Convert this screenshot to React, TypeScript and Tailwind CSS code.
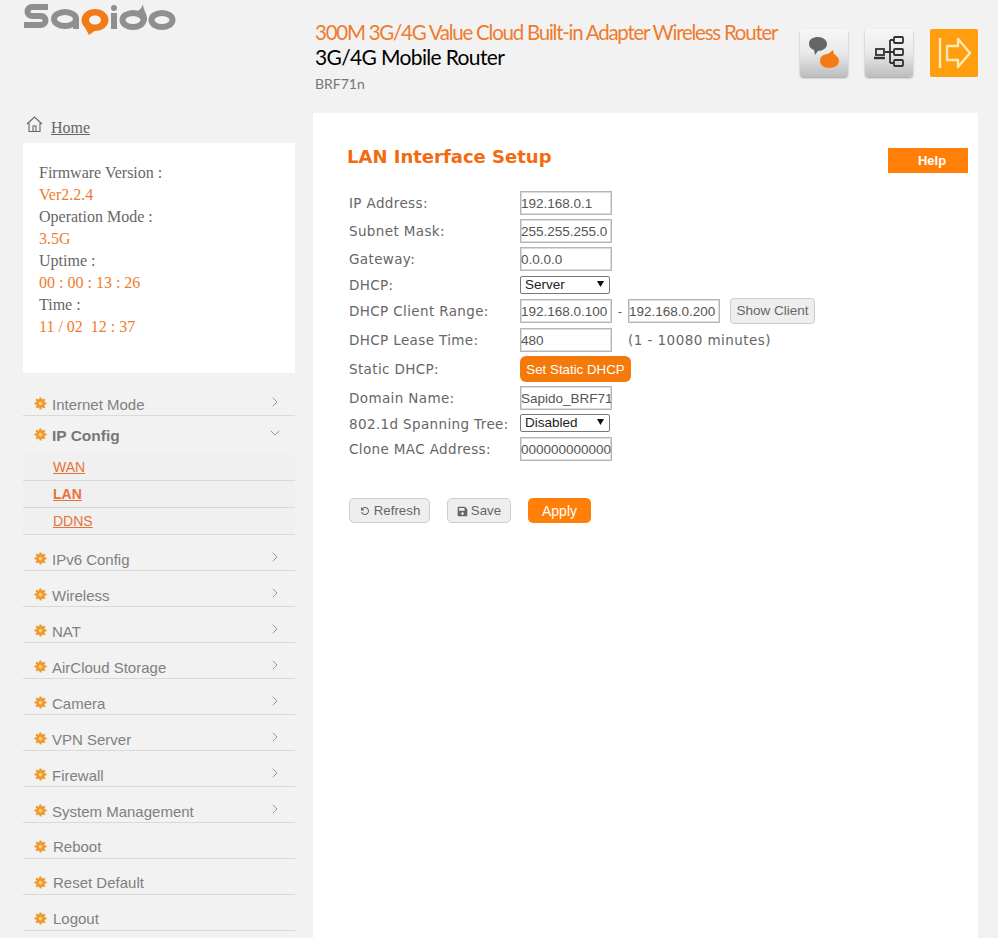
import React from "react";
import { ChevronRight, ChevronDown } from "lucide-react";
import { FaSave } from "react-icons/fa";
import { MdRefresh } from "react-icons/md";

const Logo = () => (
  <svg width="156" height="36" viewBox="0 0 156 36" className="block">
    <g fill="none" stroke="#8f8f92" strokeWidth="6">
      <path d="M25 4H9C3 4 3 13 9 13H18C24 13 24 22 18 22H1" />
      <ellipse cx="42" cy="16" rx="11" ry="7" />
      <path d="M53 15V26" />
      <ellipse cx="110" cy="17" rx="10.500" ry="7" />
      <ellipse cx="139" cy="17" rx="10.500" ry="7" />
    </g>
    <path d="M120 1C120 7 125 11 124 18L112 9C116 8 119 5 120 1Z" fill="#8f8f92" />
    <rect x="88" y="10" width="6" height="16" fill="#8f8f92" />
    <circle cx="91" cy="5" r="3" fill="#8f8f92" />
    <ellipse cx="72" cy="17" rx="13.500" ry="11" fill="#f47b14" />
    <path d="M60 21L66 32L73 27Z" fill="#f47b14" />
    <ellipse cx="72" cy="17" rx="6" ry="4.500" fill="#f2f2f2" />
  </svg>
);

const Tile = ({ children }: { children: React.ReactNode }) => (
  <div className="w-[48px] h-[48px] rounded-[4px] bg-gradient-to-b from-[#f7f7f7] via-[#e9e9e9] to-[#bdbdbd] shadow-[0_1px_2px_rgba(0,0,0,0.35)]">
    {children}
  </div>
);

const menuRows = [
  "IPv6 Config",
  "Wireless",
  "NAT",
  "AirCloud Storage",
  "Camera",
  "VPN Server",
  "Firewall",
  "System Management",
];

const Gear = () => (
  <svg width="13" height="13" viewBox="0 0 14 14" className="shrink-0">
    <g stroke="#f0992b" strokeWidth="2.400">
      <path d="M7 0.500V13.500M0.500 7H13.500M2.400 2.400L11.600 11.600M11.600 2.400L2.400 11.600" />
    </g>
    <circle cx="7" cy="7" r="4.800" fill="#f0992b" />
    <circle cx="7" cy="7" r="2" fill="#f8cf8c" />
  </svg>
);

const MenuRow = ({ label }: { label: string }) => (
  <div className="h-[36px] border-b border-[#d9d9d9] flex items-end pl-[11px] pr-[12px]">
    <div className="flex items-center w-full h-[20px]">
      <span className="-mt-[4px]"><Gear /></span>
      <span className="ml-[5px] text-[15px] text-[#808080]">{label}</span>
      <ChevronRight className="ml-auto -mt-[6px] w-[16px] h-[16px] text-[#777]" strokeWidth={1.1} />
    </div>
  </div>
);

const PlainRow = ({ label }: { label: string }) => (
  <div className="h-[36px] border-b border-[#d9d9d9] flex items-end pl-[11px] pb-[1px]">
    <div className="flex items-center h-[20px]">
      <span className="-mt-[2px]"><Gear /></span>
      <span className="ml-[6px] text-[15px] text-[#808080]">{label}</span>
    </div>
  </div>
);

const SubRow = ({ label, bold }: { label: string; bold?: boolean }) => (
  <div className="h-[27px] border-b border-[#d9d9d9] bg-[#f0f0f0] flex items-center pl-[30px]">
    <a className={`text-[14px] text-[#e8703a] underline ${bold ? "font-bold" : ""}`}>{label}</a>
  </div>
);

const Field = ({ value }: { value: string }) => (
  <input
    readOnly
    value={value}
    className="w-[92px] h-[24px] border border-[#b5b5b5] shadow-[inset_0_0_0_1px_#dcdcdc] bg-white px-0 text-[13.500px] text-[#555] outline-none font-['Liberation_Sans',sans-serif]"
  />
);

const Select = ({ value }: { value: string }) => (
  <div className="relative w-[90px] h-[18px] self-start border border-[#777] rounded-[2px] bg-white flex items-center pl-[4px] text-[13.500px] text-[#222]">
    {value}
    <svg width="7" height="6" viewBox="0 0 7 6" className="absolute right-[5px] top-[4px]">
      <path d="M0 0H7L3.500 6Z" fill="#111" />
    </svg>
  </div>
);

const Label = ({ children, tight, lift }: { children: React.ReactNode; tight?: boolean; lift?: boolean }) => (
  <div className={`text-[13.500px] tracking-[0.37px] text-[#666] font-['DejaVu_Sans',sans-serif] ${tight ? "h-[19px] leading-[21px]" : "leading-[20px]"} ${lift ? "mb-[1px]" : ""}`}>{children}</div>
);

export default function App() {
  return (
    <div className="h-[938px] overflow-hidden bg-[#f2f2f2] font-['Liberation_Sans',sans-serif]">
      <header className="h-[113px] flex pl-[23px] pr-[20px]">
        <div className="w-[292px] shrink-0 pt-[3px]">
          <Logo />
        </div>
        <div className="pt-[20px] font-['Lato',sans-serif] whitespace-nowrap">
          <div className="text-[20.500px] leading-[24px] tracking-[-1.25px] text-[#ee7c2e]">
            300M 3G/4G Value Cloud Built-in Adapter Wireless Router
          </div>
          <div className="text-[21px] leading-[26px] tracking-[-0.65px] text-black">3G/4G Mobile Router</div>
          <div className="mt-[5px] text-[14px] leading-[18px] text-[#777]">BRF71n</div>
        </div>
        <div className="ml-auto flex pt-[29px] gap-[17px]">
          <Tile>
            <svg width="48" height="48" viewBox="0 0 48 48">
              <path d="M9 15C9 10 13 8 18 8C23 8 27 11 27 15C27 19 23 22 18 22L15 26L14 21C11 20 9 18 9 15Z" fill="#666" />
              <path d="M20 32C20 27 24 25 28 25L33 21L34 25C37 27 39 29 39 32C39 36 35 39 29 39C24 39 20 36 20 32Z" fill="#f47b14" />
            </svg>
          </Tile>
          <Tile>
            <svg width="48" height="48" viewBox="0 0 48 48" fill="none" stroke="#333" strokeWidth="1.800">
              <rect x="11" y="20" width="8" height="6" />
              <path d="M9 29H20" strokeWidth="2.400" />
              <path d="M20 23H29M25 11V34M25 11H29M25 34H29" />
              <rect x="29" y="8" width="9" height="6" rx="1" />
              <rect x="29" y="20" width="9" height="6" rx="1" />
              <rect x="29" y="31" width="9" height="6" rx="1" />
            </svg>
          </Tile>
          <div className="w-[48px] h-[48px] rounded-[2px] bg-[#ff9e0f]">
            <svg width="48" height="48" viewBox="0 0 48 48" fill="none" stroke="#ffe9b8" strokeWidth="2.400">
              <path d="M10 9V39" />
              <path d="M17 17H28V10L40 24L28 38V31H17Z" strokeLinejoin="round" />
            </svg>
          </div>
        </div>
      </header>

      <div className="flex pl-[23px] pr-[20px] gap-[18px]">
        <aside className="w-[272px] shrink-0">
          <div className="h-[30px] flex items-start pl-[3px] pt-[3px] font-['Liberation_Serif',serif]">
            <svg width="17" height="17" viewBox="0 0 17 17" fill="none" stroke="#666" strokeWidth="1.100">
              <path d="M1 8L8.500 1L16 8M3 7V15.500H14V7M7 15.500V10H10V15.500" />
            </svg>
            <a className="ml-[8px] mt-[3px] text-[16px] leading-[18px] text-[#666] underline">Home</a>
          </div>
          <div className="h-[230px] bg-white px-[16px] pt-[19px] font-['Liberation_Serif',serif] text-[16px] leading-[22px]">
            <div className="text-[#666]">Firmware Version :</div>
            <div className="text-[#ee7c2e]">Ver2.2.4</div>
            <div className="text-[#666]">Operation Mode :</div>
            <div className="text-[#ee7c2e]">3.5G</div>
            <div className="text-[#666]">Uptime :</div>
            <div className="text-[#ee7c2e]">00 : 00 : 13 : 26</div>
            <div className="text-[#666]">Time :</div>
            <div className="text-[#ee7c2e]">11 / 02&nbsp;&nbsp;12 : 37</div>
          </div>
          <div className="mt-[7px]">
            <MenuRow label="Internet Mode" />
            <div className="h-[38px] flex pl-[11px] pr-[12px] pt-[10px]">
              <div className="flex items-center w-full h-[20px]">
                <span className="-mt-[4px]"><Gear /></span>
                <span className="ml-[5px] text-[15.500px] font-bold text-[#777]">IP Config</span>
                <ChevronDown className="ml-auto -mt-[6px] w-[16px] h-[16px] text-[#777]" strokeWidth={1.1} />
              </div>
            </div>
            <SubRow label="WAN" />
            <SubRow label="LAN" bold />
            <SubRow label="DDNS" />
            {menuRows.map((l) => (
              <MenuRow key={l} label={l} />
            ))}
            <PlainRow label="Reboot" />
            <PlainRow label="Reset Default" />
            <PlainRow label="Logout" />
          </div>
        </aside>

        <main className="flex-1 bg-white h-[900px] relative pl-[36px] pt-[34px]">
          <a className="absolute right-[10px] top-[35px] w-[80px] h-[25px] pl-[8px] bg-[#ff7f08] text-white text-[13px] font-bold flex items-center justify-center">Help</a>
          <h1 className="text-[18px] leading-[20px] font-bold text-[#f26b10] font-['DejaVu_Sans',sans-serif] -ml-[2px]">LAN Interface Setup</h1>
          <div className="mt-[24px] grid grid-cols-[171px_1fr] gap-y-[4px] items-center">
            <Label>IP Address:</Label>
            <Field value="192.168.0.1" />
            <Label>Subnet Mask:</Label>
            <Field value="255.255.255.0" />
            <Label>Gateway:</Label>
            <Field value="0.0.0.0" />
            <Label>DHCP:</Label>
            <div className="h-[20px] pt-[1px] flex"><Select value="Server" /></div>
            <Label lift>DHCP Client Range:</Label>
            <div className="flex items-start h-[25px]">
              <Field value="192.168.0.100" />
              <span className="w-[16px] mt-[3px] text-center text-[13px] text-[#666]">-</span>
              <Field value="192.168.0.200" />
              <button className="ml-[10px] -mt-[1px] pt-[1px] h-[26px] w-[85px] rounded-[4px] border border-[#ccc] bg-[#eeeeee] text-[13.500px] text-[#666]">Show Client</button>
            </div>
            <Label>DHCP Lease Time:</Label>
            <div className="flex items-center">
              <Field value="480" />
              <span className="ml-[16px] text-[13.500px] tracking-[0.45px] text-[#666] font-['DejaVu_Sans',sans-serif]">(1 - 10080 minutes)</span>
            </div>
            <Label>Static DHCP:</Label>
            <button className="w-[111px] h-[26px] pt-[1px] rounded-[6px] bg-[#f57a0c] text-white text-[13.300px]">Set Static DHCP</button>
            <Label>Domain Name:</Label>
            <Field value="Sapido_BRF71" />
            <Label tight>802.1d Spanning Tree:</Label>
            <div className="h-[19px] flex"><Select value="Disabled" /></div>
            <Label>Clone MAC Address:</Label>
            <Field value="000000000000" />
          </div>
          <div className="mt-[37px] flex">
            <button className="w-[81px] h-[25px] pt-[1px] rounded-[5px] border border-[#ccc] bg-[#eeeeee] flex items-center justify-center text-[13.300px] text-[#666]">
              <MdRefresh className="w-[12px] h-[12px] -scale-x-100 mr-[3px]" />Refresh
            </button>
            <button className="ml-[17px] w-[64px] h-[25px] pt-[1px] rounded-[5px] border border-[#ccc] bg-[#eeeeee] flex items-center justify-center text-[13.300px] text-[#666]">
              <FaSave className="w-[11px] h-[11px] mr-[3px]" />Save
            </button>
            <button className="ml-[17px] w-[63px] h-[25px] pt-[1px] rounded-[5px] bg-[#ff7f08] text-white text-[14px]">Apply</button>
          </div>
        </main>
      </div>
    </div>
  );
}
